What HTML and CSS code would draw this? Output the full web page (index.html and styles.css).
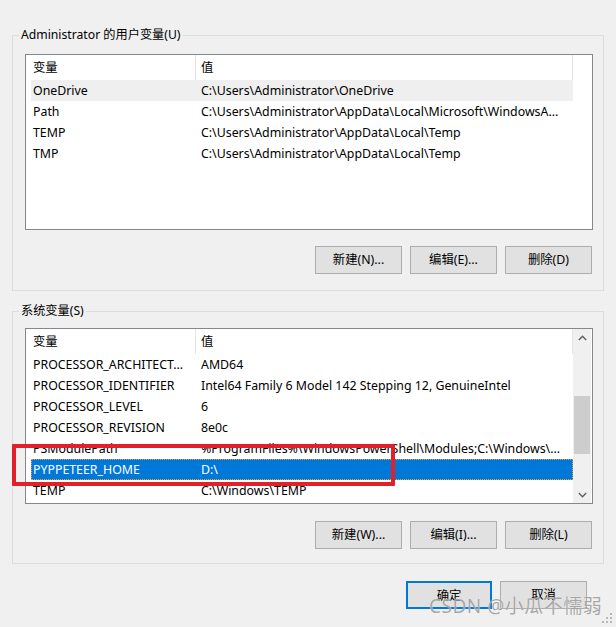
FILE: index.html
```html
<!DOCTYPE html>
<html lang="zh-CN">
<head>
<meta charset="utf-8">
<title>环境变量</title>
<link rel="stylesheet" href="styles.css">
</head>
<body>
<div class="dialog">
  <fieldset class="group g1">
    <legend>Administrator 的用户变量(U)</legend>
    <div class="listview">
      <div class="lv-content">
        <div class="lv-header">
          <div class="hc c1">变量</div>
          <div class="hc c2">值</div>
        </div>
        <div class="row inactive-sel"><div class="cell c1">OneDrive</div><div class="cell c2">C:\Users\Administrator\OneDrive</div></div>
        <div class="row"><div class="cell c1">Path</div><div class="cell c2">C:\Users\Administrator\AppData\Local\Microsoft\WindowsA...</div></div>
        <div class="row"><div class="cell c1">TEMP</div><div class="cell c2">C:\Users\Administrator\AppData\Local\Temp</div></div>
        <div class="row"><div class="cell c1">TMP</div><div class="cell c2">C:\Users\Administrator\AppData\Local\Temp</div></div>
      </div>
    </div>
    <div class="btnrow">
      <button class="btn">新建(N)...</button>
      <button class="btn">编辑(E)...</button>
      <button class="btn">删除(D)</button>
    </div>
  </fieldset>

  <fieldset class="group g2">
    <legend>系统变量(S)</legend>
    <div class="listview">
      <div class="lv-content">
        <div class="lv-header">
          <div class="hc c1">变量</div>
          <div class="hc c2">值</div>
        </div>
        <div class="row"><div class="cell c1">PROCESSOR_ARCHITECT...</div><div class="cell c2">AMD64</div></div>
        <div class="row"><div class="cell c1">PROCESSOR_IDENTIFIER</div><div class="cell c2">Intel64 Family 6 Model 142 Stepping 12, GenuineIntel</div></div>
        <div class="row"><div class="cell c1">PROCESSOR_LEVEL</div><div class="cell c2">6</div></div>
        <div class="row"><div class="cell c1">PROCESSOR_REVISION</div><div class="cell c2">8e0c</div></div>
        <div class="row"><div class="cell c1">PSModulePath</div><div class="cell c2">%ProgramFiles%\WindowsPowerShell\Modules;C:\Windows\...</div></div>
        <div class="row selected"><div class="cell c1">PYPPETEER_HOME</div><div class="cell c2">D:\</div></div>
        <div class="row"><div class="cell c1">TEMP</div><div class="cell c2">C:\Windows\TEMP</div></div>
      </div>
      <div class="vscroll">
        <div class="arrow">
          <svg width="9" height="6" viewBox="0 0 9 6"><path d="M0.8 5 L4.5 1.3 L8.2 5" fill="none" stroke="#606060" stroke-width="1.4"/></svg>
        </div>
        <div class="track"><div class="thumb"></div></div>
        <div class="arrow">
          <svg width="9" height="6" viewBox="0 0 9 6"><path d="M0.8 1 L4.5 4.7 L8.2 1" fill="none" stroke="#606060" stroke-width="1.4"/></svg>
        </div>
      </div>
    </div>
    <div class="btnrow">
      <button class="btn">新建(W)...</button>
      <button class="btn">编辑(I)...</button>
      <button class="btn">删除(L)</button>
    </div>
  </fieldset>

  <div class="footer">
    <button class="btn default">确定</button>
    <button class="btn">取消</button>
  </div>

  <div class="highlight-box"></div>
  <div class="watermark">CSDN @小瓜不懦弱</div>
  <svg class="grip" width="11" height="11" viewBox="0 0 11 11">
    <rect x="8" y="0" width="2" height="2" fill="#b8b8b8"/>
    <rect x="4" y="4" width="2" height="2" fill="#b8b8b8"/>
    <rect x="8" y="4" width="2" height="2" fill="#b8b8b8"/>
    <rect x="0" y="8" width="2" height="2" fill="#b8b8b8"/>
    <rect x="4" y="8" width="2" height="2" fill="#b8b8b8"/>
    <rect x="8" y="8" width="2" height="2" fill="#b8b8b8"/>
  </svg>
</div>
</body>
</html>
```

FILE: styles.css
```css
* { box-sizing: border-box; }
html, body {
  margin: 0;
  padding: 0;
  background: #f0f0f0;
}
body {
  font-family: "Noto Sans", "Noto Sans CJK SC", sans-serif;
  font-size: 12px;
  color: #000;
}
.dialog {
  position: relative;
  width: 616px;
  height: 627px;
  padding-top: 27px;
  overflow: hidden;
}
.group {
  margin: 0 12px;
  padding: 0;
  border: 1px solid #dcdcdc;
  min-width: 0;
}
.group legend {
  margin-left: 6px;
  padding: 0 2px;
  height: 16px;
  line-height: 16px;
  font-size: 12.2px;
}
.g2 { margin-top: 12px; }
.listview {
  display: flex;
  margin: 11px 10px 0 12px;
  height: 176px;
  background: #fff;
  border: 1px solid #828790;
}
.g2 .listview { margin-top: 9px; }
.lv-content {
  width: 547px;
  overflow: hidden;
  font-size: 12.35px;
}
.lv-header {
  display: flex;
  height: 25px;
  align-items: stretch;
  border-right: 1px solid #e5e5e5;
}
.hc {
  line-height: 26px;
  white-space: nowrap;
}
.hc.c1 {
  width: 170px;
  padding-left: 7px;
  border-right: 1px solid #e5e5e5;
}
.hc.c2 {
  flex: 1;
  padding-left: 5px;
}
.row {
  display: flex;
  margin-left: 5px;
  height: 21px;
  line-height: 21px;
  white-space: nowrap;
}
.cell { overflow: hidden; }
.row .c1 {
  width: 165px;
  padding-left: 2px;
}
.row .c2 {
  flex: 1;
  padding-left: 5px;
}
.row.inactive-sel { background: #efefef; }
.row.selected {
  background: #0078d7;
  color: #fff;
  outline: 1px dotted #e6a23c;
  outline-offset: -1px;
}
.vscroll {
  width: 18px;
  margin-left: auto;
  margin-right: 1px;
  background: #f0f0f0;
  display: flex;
  flex-direction: column;
}
.arrow {
  height: 17px;
  display: flex;
  align-items: center;
  justify-content: center;
}
.track {
  flex: 1;
  padding: 50px 1px 0;
}
.thumb {
  height: 58px;
  background: #cdcdcd;
}
.btnrow {
  display: flex;
  justify-content: flex-end;
  gap: 8px;
  margin: 16px 11px 16px 0;
}
.g2 .btnrow { margin: 17px 11px 14px 0; }
.btn {
  width: 87px;
  height: 28px;
  padding: 0;
  background: #e1e1e1;
  border: 1px solid #adadad;
  font-family: "Noto Sans", "Noto Sans CJK SC", sans-serif;
  font-size: 12.35px;
  color: #000;
  line-height: 26px;
}
.footer {
  display: flex;
  justify-content: flex-end;
  gap: 8px;
  margin: 17px 29px 0 0;
}
.btn.default {
  width: 86px;
  border: 2px solid #0078d7;
}
.highlight-box {
  position: absolute;
  left: 12px;
  top: 444px;
  width: 383px;
  height: 42px;
  border: 4px solid #e3202a;
  border-radius: 1px;
}
.watermark {
  position: absolute;
  left: 429px;
  top: 594px;
  font-size: 19px;
  line-height: 24px;
  letter-spacing: 0.5px;
  color: rgba(140, 140, 140, 0.75);
  text-shadow: 0 0 1px rgba(255, 255, 255, 0.8);
  white-space: nowrap;
}
.grip {
  position: absolute;
  right: 3px;
  bottom: 3px;
}
```
